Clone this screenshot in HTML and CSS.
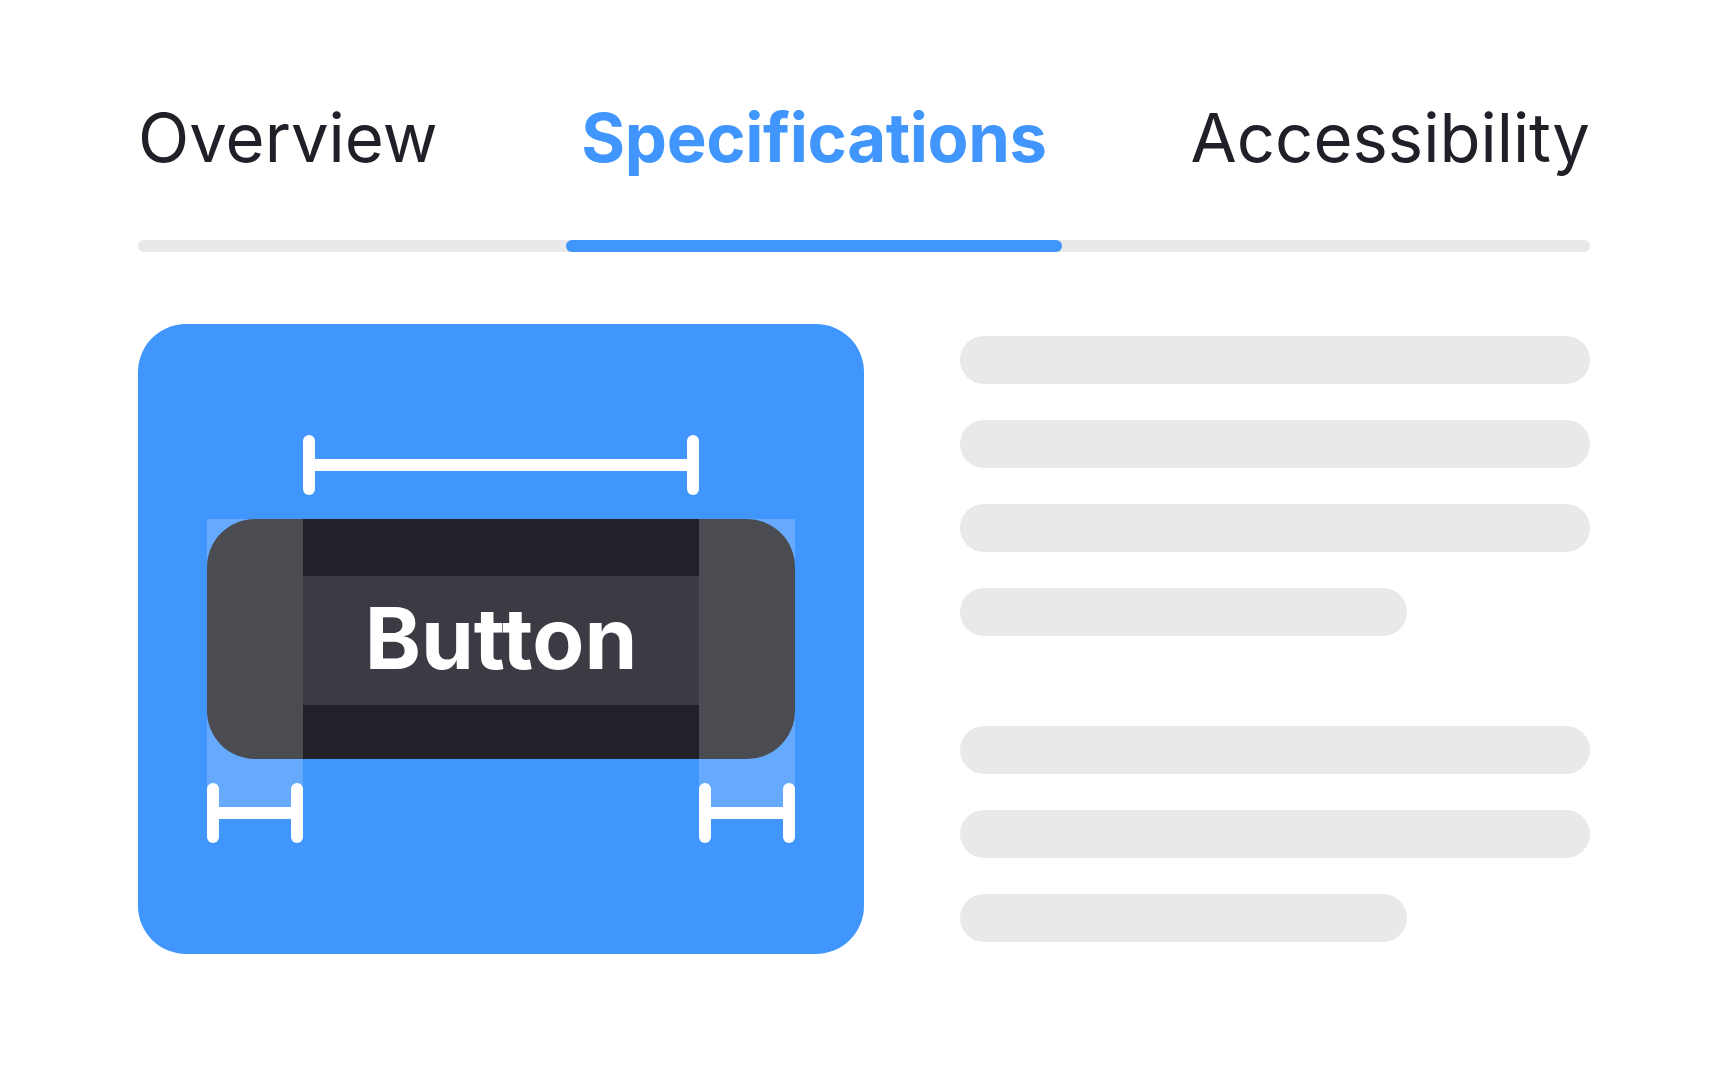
FILE: index.html
```html
<!DOCTYPE html>
<html lang="en">
<head>
<meta charset="utf-8">
<title>Specifications</title>
<link rel="stylesheet" href="styles.css">
</head>
<body>
<main class="page">
  <nav class="tabs">
    <span class="tab">Overview</span>
    <span class="tab tab-active">Specifications</span>
    <span class="tab">Accessibility</span>
  </nav>
  <div class="track"><div class="indicator"></div></div>

  <section class="content">
    <div class="card">
      <div class="stage">
        <div class="measure measure-top"><span class="tick"></span><span class="bar"></span><span class="tick"></span></div>
        <div class="pad-col pad-left"></div>
        <div class="pad-col pad-right"></div>
        <div class="button">
          <div class="btn-side btn-side-left"></div>
          <div class="btn-center">
            <div class="btn-band"></div>
            <div class="btn-label">Button</div>
            <div class="btn-band"></div>
          </div>
          <div class="btn-side btn-side-right"></div>
        </div>
        <div class="measure measure-left"><span class="tick"></span><span class="bar"></span><span class="tick"></span></div>
        <div class="measure measure-right"><span class="tick"></span><span class="bar"></span><span class="tick"></span></div>
      </div>
    </div>

    <div class="lines">
      <div class="group">
        <div class="line"></div>
        <div class="line"></div>
        <div class="line"></div>
        <div class="line line-short"></div>
      </div>
      <div class="group">
        <div class="line"></div>
        <div class="line"></div>
        <div class="line line-short"></div>
      </div>
    </div>
  </section>
</main>
</body>
</html>
```

FILE: styles.css
```css
html, body {
  margin: 0;
  padding: 0;
  background: #ffffff;
}

body {
  font-family: Inter, "Noto Sans", "Liberation Sans", sans-serif;
  color: #202028;
}

.page {
  width: 1452px;
  padding: 104px 0 0 138px;
}

.tabs {
  display: flex;
  justify-content: space-between;
  height: 67px;
}

.tab {
  font-size: 67px;
  line-height: 1;
  font-weight: 400;
  color: #202028;
  letter-spacing: 0;
}

.tab-active {
  font-weight: 700;
  color: #4096fd;
  letter-spacing: -0.4px;
}

.track {
  margin-top: 69px;
  height: 12px;
  border-radius: 6px;
  background: #e9e9eb;
  display: flex;
}

.indicator {
  margin-left: 428px;
  width: 496px;
  height: 12px;
  border-radius: 6px;
  background: #4096fd;
}

.content {
  margin-top: 72px;
  display: flex;
  align-items: center;
  gap: 96px;
}

.card {
  width: 726px;
  height: 630px;
  box-sizing: border-box;
  border-radius: 48px;
  background: #4096fd;
  display: flex;
  align-items: center;
  justify-content: center;
  flex-shrink: 0;
}

.stage {
  display: grid;
  grid-template-columns: 96px 396px 96px;
  grid-template-rows: 60px 240px 60px;
  row-gap: 24px;
}

.pad-col {
  grid-row: 2 / 4;
  align-self: start;
  height: 294px;
  background: #66aafd;
}

.pad-left { grid-column: 1; }
.pad-right { grid-column: 3; }

.button {
  grid-column: 1 / 4;
  grid-row: 2;
  display: grid;
  grid-template-columns: 96px 396px 96px;
  border-radius: 48px;
  overflow: hidden;
}

.btn-side {
  background: #4b4c52;
}

.btn-center {
  display: grid;
  grid-template-rows: 57px 129px 54px;
  background: #3b3b44;
}

.btn-band {
  background: #21212a;
}

.btn-label {
  display: flex;
  align-items: center;
  justify-content: center;
  color: #ffffff;
  font-size: 85px;
  font-weight: 700;
  line-height: 1;
  padding-bottom: 4px;
  box-sizing: border-box;
}

.measure {
  display: flex;
  align-items: center;
  height: 60px;
}

.measure-top { grid-column: 2; grid-row: 1; }
.measure-left { grid-column: 1; grid-row: 3; }
.measure-right { grid-column: 3; grid-row: 3; }

.tick {
  width: 12px;
  height: 60px;
  border-radius: 6px;
  background: #ffffff;
  flex-shrink: 0;
}

.bar {
  flex: 1;
  height: 12px;
  background: #ffffff;
}

.lines {
  width: 630px;
  display: flex;
  flex-direction: column;
  gap: 90px;
}

.group {
  display: flex;
  flex-direction: column;
  gap: 36px;
}

.line {
  height: 48px;
  border-radius: 24px;
  background: #e9e9eb;
}

.line-short {
  width: 447px;
}
```
